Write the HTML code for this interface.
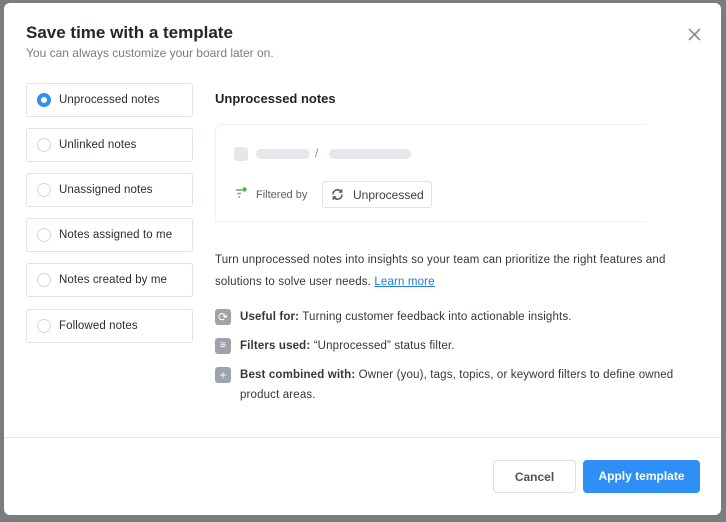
<!DOCTYPE html>
<html><head><style>
*{box-sizing:border-box;margin:0;padding:0}
body{width:726px;height:522px;background:#7b7c7e;font-family:"Liberation Sans",sans-serif;position:relative;overflow:hidden;color:#1f2226}
.m{position:absolute;left:4px;top:3px;width:717px;height:512px;background:#fff;border-radius:6px}
.a{position:absolute}
h1{position:absolute;left:22px;top:20px;font-size:17px;font-weight:bold;color:#23262b}
.sub{position:absolute;left:22px;top:43px;font-size:12px;color:#777b82}
.it{position:absolute;left:22px;width:167px;height:34px;border:1px solid #dfe2e6;border-radius:3px;font-size:11.5px;color:#2a2d33;padding:10px 0 0 32px;letter-spacing:0.1px}
.it:before{content:"";position:absolute;left:10px;top:9px;width:14px;height:14px;border:1px solid #d5d8dc;border-radius:50%;box-sizing:border-box}
.it.s:before{border:4px solid #2e8ff7;background:#fff}
.p{font-size:11.5px;color:#33363c;line-height:22px;letter-spacing:0.15px}
.ic{position:absolute;left:211px;width:16px;height:16px;border-radius:3px;background:#9ea3aa;color:#fff;font-size:12px;line-height:16px;text-align:center}
.btn{position:absolute;top:457px;height:33px;border-radius:4px;font-size:12px;font-weight:bold;text-align:center;line-height:32px}
</style></head><body>
<div class="m">
<h1>Save time with a template</h1>
<div class="sub">You can always customize your board later on.</div>
<svg class="a" style="left:684px;top:25px" width="13" height="13"><path d="M1 1L12 12M12 1L1 12" stroke="#8a8f96" stroke-width="1.6"/></svg>
<div class="it s" style="top:80px">Unprocessed notes</div>
<div class="it" style="top:125px">Unlinked notes</div>
<div class="it" style="top:170px">Unassigned notes</div>
<div class="it" style="top:215px">Notes assigned to me</div>
<div class="it" style="top:260px">Notes created by me</div>
<div class="it" style="top:306px">Followed notes</div>
<div class="a" style="left:211px;top:88px;font-size:13px;font-weight:bold">Unprocessed notes</div>
<div class="a" style="left:211px;top:121px;width:430px;height:98px;border:1px solid #eceef0;border-right:none;border-radius:8px 0 0 0;background:linear-gradient(90deg,#fff 90%,rgba(255,255,255,0))"></div>
<div class="a" style="left:230px;top:144px;width:14px;height:14px;background:#e5e7ea;border-radius:3px"></div>
<div class="a" style="left:252px;top:146px;width:54px;height:10px;background:#e5e7ea;border-radius:5px"></div>
<div class="a" style="left:311px;top:143px;font-size:12px;color:#888">/</div>
<div class="a" style="left:325px;top:146px;width:82px;height:10px;background:#e5e7ea;border-radius:5px"></div>
<svg class="a" style="left:231px;top:184px" width="12" height="14"><path d="M1 3H7M2.5 6.5H6M3.5 10H5" stroke="#8a8f96" stroke-width="1.4"/><circle cx="9.5" cy="2.5" r="2.2" fill="#37c23a"/></svg>
<div class="a" style="left:252px;top:186px;font-size:11px;color:#5c6066">Filtered by</div>
<div class="a" style="left:318px;top:178px;width:110px;height:27px;border:1px solid #dfe2e6;border-radius:3px;font-size:12px;color:#3a3d42;padding:6px 0 0 30px">Unprocessed</div>
<svg class="a" style="left:327px;top:185px" width="13" height="13" viewBox="0 0 13 13"><path d="M2 6.5A4.5 4.5 0 0 1 10 3.5M11 6.5A4.5 4.5 0 0 1 3 9.5" stroke="#4d5157" stroke-width="1.4" fill="none"/><path d="M10.8 1.2V4.2H7.8M2.2 11.8V8.8H5.2" stroke="#4d5157" stroke-width="1.2" fill="none"/></svg>
<div class="a p" style="left:211px;top:246px;width:478px">Turn unprocessed notes into insights so your team can prioritize the right features and solutions to solve user needs. <span style="color:#1d7ae0;text-decoration:underline">Learn more</span></div>
<div class="ic" style="top:306px">⟳</div>
<div class="a p" style="left:236px;top:303px"><b>Useful for:</b> Turning customer feedback into actionable insights.</div>
<div class="ic" style="top:335px;font-size:10px">≡</div>
<div class="a p" style="left:236px;top:332px"><b>Filters used:</b> “Unprocessed” status filter.</div>
<div class="ic" style="top:364px">+</div>
<div class="a p" style="left:236px;top:362px;width:456px;line-height:20px"><b>Best combined with:</b> Owner (you), tags, topics, or keyword filters to define owned product areas.</div>
<div class="a" style="left:0;top:434px;width:717px;height:1px;background:#e3e5e8"></div>
<div class="btn" style="left:489px;width:83px;border:1px solid #dcdfe3;color:#4f545b">Cancel</div>
<div class="btn" style="left:579px;width:117px;background:#2e8ff7;color:#fff">Apply template</div>
</div>
</body></html>
